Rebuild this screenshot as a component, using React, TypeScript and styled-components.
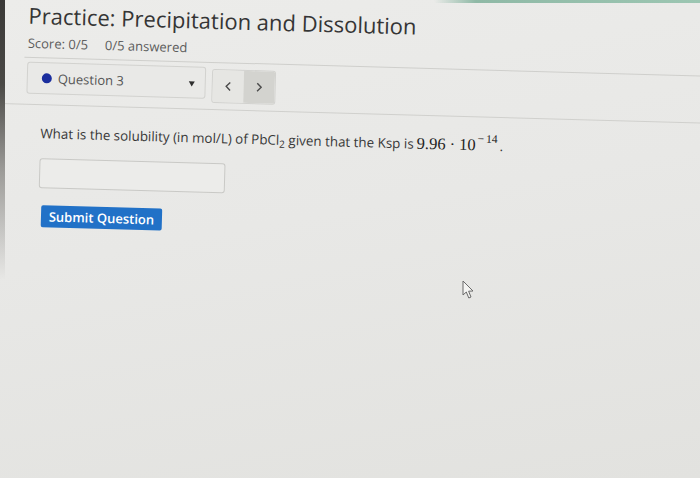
import React from "react";
import styled, { createGlobalStyle } from "styled-components";

const GlobalStyle = createGlobalStyle`
  html, body {
    margin: 0;
    padding: 0;
    height: 100%;
  }
  body {
    font-family: "Open Sans", "Liberation Sans", sans-serif;
    background: #e7e7e5;
    overflow: hidden;
  }
`;

const Screen = styled.div`
  position: relative;
  width: 700px;
  height: 478px;
  overflow: hidden;
  background: linear-gradient(170deg, #ececea 0%, #e8e8e6 45%, #e2e2df 100%);
`;

const Bezel = styled.div`
  position: absolute;
  left: 0;
  top: 0;
  height: 280px;
  width: 5px;
  background: linear-gradient(180deg, #3a3937 0%, #4a4946 30%, #9a9996 60%, rgba(228, 228, 225, 0) 100%);
`;

const TopEdge = styled.div`
  position: absolute;
  left: 0;
  right: 0;
  top: 0;
  height: 3px;
  background: linear-gradient(90deg, rgba(0, 0, 0, 0) 62%, #8fb9a6 68%, #9cc6b2 100%);
`;

const Tilted = styled.div`
  width: 740px;
  transform: rotate(1.6deg);
  transform-origin: 0 0;
`;

const Header = styled.header`
  margin-left: 26px;
  padding: 0 0 5px 3px;
  border-bottom: 1px solid #cfcfcc;
`;

const Title = styled.h1`
  margin: 0;
  font-size: 22px;
  line-height: 28px;
  font-weight: 400;
  color: #353535;
`;

const ScoreLine = styled.div`
  display: flex;
  gap: 17px;
  margin-top: 5px;
  font-size: 13px;
  line-height: 18px;
  color: #5b5b5b;
`;

const NavRow = styled.div`
  display: flex;
  align-items: flex-start;
  gap: 6px;
  padding: 4px 0 6px 29px;
  border-bottom: 1px solid #d0d0cd;
`;

const Dropdown = styled.div`
  display: flex;
  align-items: center;
  box-sizing: border-box;
  width: 179px;
  height: 32px;
  padding: 0 10px 0 14px;
  border: 1px solid #d2d2cf;
  border-radius: 3px;
  background: #e9e9e7;
  font-size: 13px;
  color: #555;
`;

const Dot = styled.span`
  width: 10px;
  height: 10px;
  border-radius: 50%;
  background: #1b2e9e;
  margin-right: 6px;
  flex: none;
`;

const DropLabel = styled.span`
  flex: 1;
`;

const Caret = styled.span`
  width: 0;
  height: 0;
  border-left: 3.5px solid transparent;
  border-right: 3.5px solid transparent;
  border-top: 5px solid #2e2e2e;
  margin-top: 3px;
`;

const NavGroup = styled.div`
  display: flex;
  margin-top: 2px;
  border: 1px solid #d2d2cf;
  border-radius: 3px;
  overflow: hidden;
`;

const NavButton = styled.button<{ $active?: boolean }>`
  display: flex;
  align-items: center;
  justify-content: center;
  width: 31px;
  height: 32px;
  padding: 0;
  border: none;
  background: ${(p) => (p.$active ? "#d3d3cf" : "#e6e6e3")};
  color: #555;
`;

const Body = styled.section`
  padding: 19px 0 0 44px;
`;

const Question = styled.p`
  margin: 0;
  font-size: 13.4px;
  line-height: 18px;
  color: #383838;

  sub {
    font-size: 10px;
    line-height: 0;
    vertical-align: -3px;
  }
`;

const MathText = styled.span`
  margin: 0 2px 0 3px;
  font-family: "Liberation Serif", "DejaVu Serif", serif;
  font-size: 16.5px;
  color: #232323;

  sup {
    font-size: 11.5px;
    line-height: 0;
    vertical-align: 8px;
    margin-left: 2px;
  }
`;

const Operator = styled.span`
  margin: 0 4px;
`;

const Minus = styled.span`
  margin-right: 2px;
`;

const AnswerInput = styled.div`
  box-sizing: border-box;
  width: 186px;
  height: 30px;
  margin-top: 16px;
  border: 1px solid #c9c9c6;
  border-radius: 3px;
  background: #ececea;
`;

const SubmitButton = styled.button`
  display: block;
  box-sizing: border-box;
  width: 121px;
  height: 22px;
  margin: 17px 0 0 3px;
  padding: 0;
  border: none;
  border-radius: 2px;
  background: #2171c7;
  color: #ffffff;
  font-family: "Open Sans", "Liberation Sans", sans-serif;
  font-size: 13px;
  font-weight: 600;
`;

const Cursor = styled.svg`
  position: absolute;
  left: 462px;
  top: 280px;
`;

const Chevron = ({ dir }: { dir: "left" | "right" }) => (
  <svg width="7" height="10" viewBox="0 0 7 10">
    <path
      d={dir === "left" ? "M5.5 1 L1.5 5 L5.5 9" : "M1.5 1 L5.5 5 L1.5 9"}
      fill="none"
      stroke="#4a4a4a"
      strokeWidth="1.4"
    />
  </svg>
);

export default function App() {
  return (
    <Screen>
      <GlobalStyle />
      <Tilted>
        <Header>
          <Title>Practice: Precipitation and Dissolution</Title>
          <ScoreLine>
            <span>Score: 0/5</span>
            <span>0/5 answered</span>
          </ScoreLine>
        </Header>
        <NavRow>
          <Dropdown>
            <Dot />
            <DropLabel>Question 3</DropLabel>
            <Caret />
          </Dropdown>
          <NavGroup>
            <NavButton>
              <Chevron dir="left" />
            </NavButton>
            <NavButton $active>
              <Chevron dir="right" />
            </NavButton>
          </NavGroup>
        </NavRow>
        <Body>
          <Question>
            What is the solubility (in mol/L) of PbCl<sub>2</sub> given that the Ksp is
            <MathText>
              9.96<Operator>·</Operator>10
              <sup>
                <Minus>−</Minus>14
              </sup>
            </MathText>
            .
          </Question>
          <AnswerInput />
          <SubmitButton>Submit Question</SubmitButton>
        </Body>
      </Tilted>
      <Cursor width="12" height="20" viewBox="0 0 12 20">
        <path
          d="M1 1 L1 15 L4.3 12 L6.8 18 L9 17 L6.6 11.2 L11 11 Z"
          fill="#f4f4f2"
          stroke="#6a6a6a"
          strokeWidth="1"
          strokeLinejoin="round"
        />
      </Cursor>
      <Bezel />
      <TopEdge />
    </Screen>
  );
}
